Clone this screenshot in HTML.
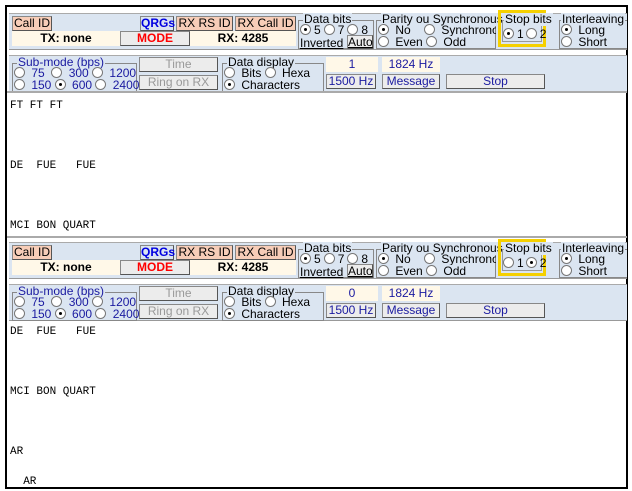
<!DOCTYPE html><html><head><style>
*{box-sizing:border-box}
body{margin:0;width:632px;height:491px;background:#fff;position:relative;overflow:hidden;font-family:"Liberation Sans",Arial,sans-serif;font-size:12px;color:#000}
.a{position:absolute}
.frame{left:5px;top:5px;width:623px;height:484px;border:2px solid #000}
.pn{position:absolute;left:9px;width:618px;height:78px}
.bar{position:absolute;left:0;width:618px;background:#dbe5f1;border-top:1px solid #aaa;border-bottom:1px solid #999}
.btn{position:absolute;height:15px;border:1px solid #888;border-right-color:#555;border-bottom-color:#555;text-align:center;line-height:13px;font-size:12px}
.sal{background:#f7cdb8}
.gry{background:#ececec}
.crm{position:absolute;background:#fff8e8;text-align:center;font-weight:bold;line-height:15px;height:15px}
.grp{position:absolute;border:1px solid #888;}
.lg{position:absolute;top:-8px;background:#dbe5f1;padding:0 1px;line-height:13px;white-space:nowrap}
.r{display:inline-block;width:11px;height:11px;border-radius:50%;border:1px solid #777;background:#fff;vertical-align:-1px;position:relative;margin-right:3px}
.r.c:after{content:"";position:absolute;left:3px;top:3px;width:3px;height:3px;border-radius:50%;background:#000}
.t{position:absolute;white-space:nowrap;line-height:12px}
.mono{position:absolute;left:10px;font-family:"Liberation Mono","Courier New",monospace;font-size:11px;white-space:pre}
.ybox{position:absolute;border:3px solid #f5d000}
.gl{position:absolute;left:7px;width:620px;height:2px;background:#aaa}
</style></head><body>
<div class="a frame"></div>

<!-- panel 1 -->
<div class="pn" style="top:13px">
 <div class="bar" style="top:0;height:37px"></div>
 <div class="bar" style="top:42px;height:37px"></div>
 <div class="btn sal" style="left:3px;top:3px;width:40px">Call ID</div>
 <div class="btn gry" style="left:131px;top:3px;width:34px;color:#0000e0;font-weight:bold;background:#dbe5f1">QRGs</div>
 <div class="btn sal" style="left:167px;top:3px;width:57px">RX RS ID</div>
 <div class="btn sal" style="left:226px;top:3px;width:61px">RX Call ID</div>
 <div class="crm" style="left:3px;top:18px;width:108px">TX: none</div>
 <div class="btn gry" style="left:111px;top:18px;width:70px;color:#f00;font-weight:bold">MODE</div>
 <div class="crm" style="left:181px;top:18px;width:106px">RX: 4285</div>
 <div class="grp" style="left:289px;top:7px;width:76px;height:29px"><span class="lg" style="left:4px">Data bits</span>
  <div class="t" style="left:1px;top:3px"><span class="r c"></span>5<span class="r" style="margin-left:3px"></span>7<span class="r" style="margin-left:3px"></span>8</div>
  <div class="t" style="left:1px;top:16px;text-decoration:underline">Inverted</div><div class="btn gry" style="left:48px;top:14px;width:26px;height:14px;line-height:12px;text-decoration:underline">Auto</div></div>
 <div class="grp" style="left:367px;top:7px;width:120px;height:29px"><span class="lg" style="left:4px">Parity ou Synchronous</span>
  <div class="t" style="left:1px;top:3px;overflow:hidden;width:118px"><span class="r c"></span> No&nbsp;&nbsp;&nbsp; <span class="r"></span> Synchronou</div>
  <div class="t" style="left:1px;top:15px"><span class="r"></span> Even <span class="r"></span> Odd</div></div>
 <div class="ybox" style="left:489px;top:-3px;width:48px;height:37px"></div>
 <div class="grp" style="left:493px;top:7px;width:40px;height:22px;border-color:#999"><span class="lg" style="left:1px">Stop bits</span>
  <div class="t" style="left:0px;top:7px"><span class="r c"></span>1<span class="r" style="margin-left:2px"></span>2</div></div>
 <div class="grp" style="left:550px;top:7px;width:68px;height:29px;border-right:none"><span class="lg" style="left:1px">Interleaving</span>
  <div class="t" style="left:1px;top:3px"><span class="r c"></span> Long</div>
  <div class="t" style="left:1px;top:15px"><span class="r"></span> Short</div></div>
 <div class="grp" style="left:3px;top:50px;width:125px;height:29px"><span class="lg" style="left:4px;color:#1a1aa0">Sub-mode (bps)</span>
  <div class="t" style="left:1px;top:3px;color:#1a1aa0"><span class="r"></span> 75&nbsp; <span class="r"></span> 300 <span class="r"></span> 1200</div>
  <div class="t" style="left:1px;top:15px;color:#1a1aa0"><span class="r"></span> 150 <span class="r c"></span> 600 <span class="r"></span> 2400</div></div>
 <div class="btn gry" style="left:130px;top:44px;width:79px;color:#999">Time</div>
 <div class="btn gry" style="left:130px;top:62px;width:79px;color:#999">Ring on RX</div>
 <div class="grp" style="left:213px;top:50px;width:102px;height:29px"><span class="lg" style="left:4px">Data display</span>
  <div class="t" style="left:1px;top:3px"><span class="r"></span> Bits <span class="r"></span> Hexa</div>
  <div class="t" style="left:1px;top:15px"><span class="r c"></span> Characters</div></div>
 <div class="crm" style="left:317px;top:44px;width:52px;font-weight:normal;color:#1a1aa0">1</div>
 <div class="crm" style="left:373px;top:44px;width:58px;font-weight:normal;color:#1a1aa0">1824 Hz</div>
 <div class="btn gry" style="left:317px;top:61px;width:50px;color:#1a1aa0">1500 Hz</div>
 <div class="btn gry" style="left:373px;top:61px;width:58px;color:#1a1aa0">Message</div>
 <div class="btn gry" style="left:437px;top:61px;width:99px;color:#1a1aa0">Stop</div>
</div>
<div class="gl" style="top:91px"></div>
<div class="mono" style="top:100px">FT FT FT</div>
<div class="mono" style="top:160px">DE  FUE   FUE</div>
<div class="mono" style="top:220px">MCI BON QUART</div>
<div class="gl" style="top:236px"></div>

<!-- panel 2 -->
<div class="pn" style="top:242px">
 <div class="bar" style="top:0;height:37px"></div>
 <div class="bar" style="top:42px;height:37px"></div>
 <div class="btn sal" style="left:3px;top:3px;width:40px">Call ID</div>
 <div class="btn gry" style="left:131px;top:3px;width:34px;color:#0000e0;font-weight:bold;background:#dbe5f1">QRGs</div>
 <div class="btn sal" style="left:167px;top:3px;width:57px">RX RS ID</div>
 <div class="btn sal" style="left:226px;top:3px;width:61px">RX Call ID</div>
 <div class="crm" style="left:3px;top:18px;width:108px">TX: none</div>
 <div class="btn gry" style="left:111px;top:18px;width:70px;color:#f00;font-weight:bold">MODE</div>
 <div class="crm" style="left:181px;top:18px;width:106px">RX: 4285</div>
 <div class="grp" style="left:289px;top:7px;width:76px;height:29px"><span class="lg" style="left:4px">Data bits</span>
  <div class="t" style="left:1px;top:3px"><span class="r c"></span>5<span class="r" style="margin-left:3px"></span>7<span class="r" style="margin-left:3px"></span>8</div>
  <div class="t" style="left:1px;top:16px;text-decoration:underline">Inverted</div><div class="btn gry" style="left:48px;top:14px;width:26px;height:14px;line-height:12px;text-decoration:underline">Auto</div></div>
 <div class="grp" style="left:367px;top:7px;width:120px;height:29px"><span class="lg" style="left:4px">Parity ou Synchronous</span>
  <div class="t" style="left:1px;top:3px;overflow:hidden;width:118px"><span class="r c"></span> No&nbsp;&nbsp;&nbsp; <span class="r"></span> Synchronou</div>
  <div class="t" style="left:1px;top:15px"><span class="r"></span> Even <span class="r"></span> Odd</div></div>
 <div class="ybox" style="left:489px;top:-3px;width:48px;height:37px"></div>
 <div class="grp" style="left:493px;top:7px;width:40px;height:22px;border-color:#999"><span class="lg" style="left:1px">Stop bits</span>
  <div class="t" style="left:0px;top:7px"><span class="r"></span>1<span class="r c" style="margin-left:2px"></span>2</div></div>
 <div class="grp" style="left:550px;top:7px;width:68px;height:29px;border-right:none"><span class="lg" style="left:1px">Interleaving</span>
  <div class="t" style="left:1px;top:3px"><span class="r c"></span> Long</div>
  <div class="t" style="left:1px;top:15px"><span class="r"></span> Short</div></div>
 <div class="grp" style="left:3px;top:50px;width:125px;height:29px"><span class="lg" style="left:4px;color:#1a1aa0">Sub-mode (bps)</span>
  <div class="t" style="left:1px;top:3px;color:#1a1aa0"><span class="r"></span> 75&nbsp; <span class="r"></span> 300 <span class="r"></span> 1200</div>
  <div class="t" style="left:1px;top:15px;color:#1a1aa0"><span class="r"></span> 150 <span class="r c"></span> 600 <span class="r"></span> 2400</div></div>
 <div class="btn gry" style="left:130px;top:44px;width:79px;color:#999">Time</div>
 <div class="btn gry" style="left:130px;top:62px;width:79px;color:#999">Ring on RX</div>
 <div class="grp" style="left:213px;top:50px;width:102px;height:29px"><span class="lg" style="left:4px">Data display</span>
  <div class="t" style="left:1px;top:3px"><span class="r"></span> Bits <span class="r"></span> Hexa</div>
  <div class="t" style="left:1px;top:15px"><span class="r c"></span> Characters</div></div>
 <div class="crm" style="left:317px;top:44px;width:52px;font-weight:normal;color:#1a1aa0">0</div>
 <div class="crm" style="left:373px;top:44px;width:58px;font-weight:normal;color:#1a1aa0">1824 Hz</div>
 <div class="btn gry" style="left:317px;top:61px;width:50px;color:#1a1aa0">1500 Hz</div>
 <div class="btn gry" style="left:373px;top:61px;width:58px;color:#1a1aa0">Message</div>
 <div class="btn gry" style="left:437px;top:61px;width:99px;color:#1a1aa0">Stop</div>
</div>
<div class="mono" style="top:326px">DE  FUE   FUE</div>
<div class="mono" style="top:386px">MCI BON QUART</div>
<div class="mono" style="top:446px">AR</div>
<div class="mono" style="top:476px">  AR</div>
</body></html>
